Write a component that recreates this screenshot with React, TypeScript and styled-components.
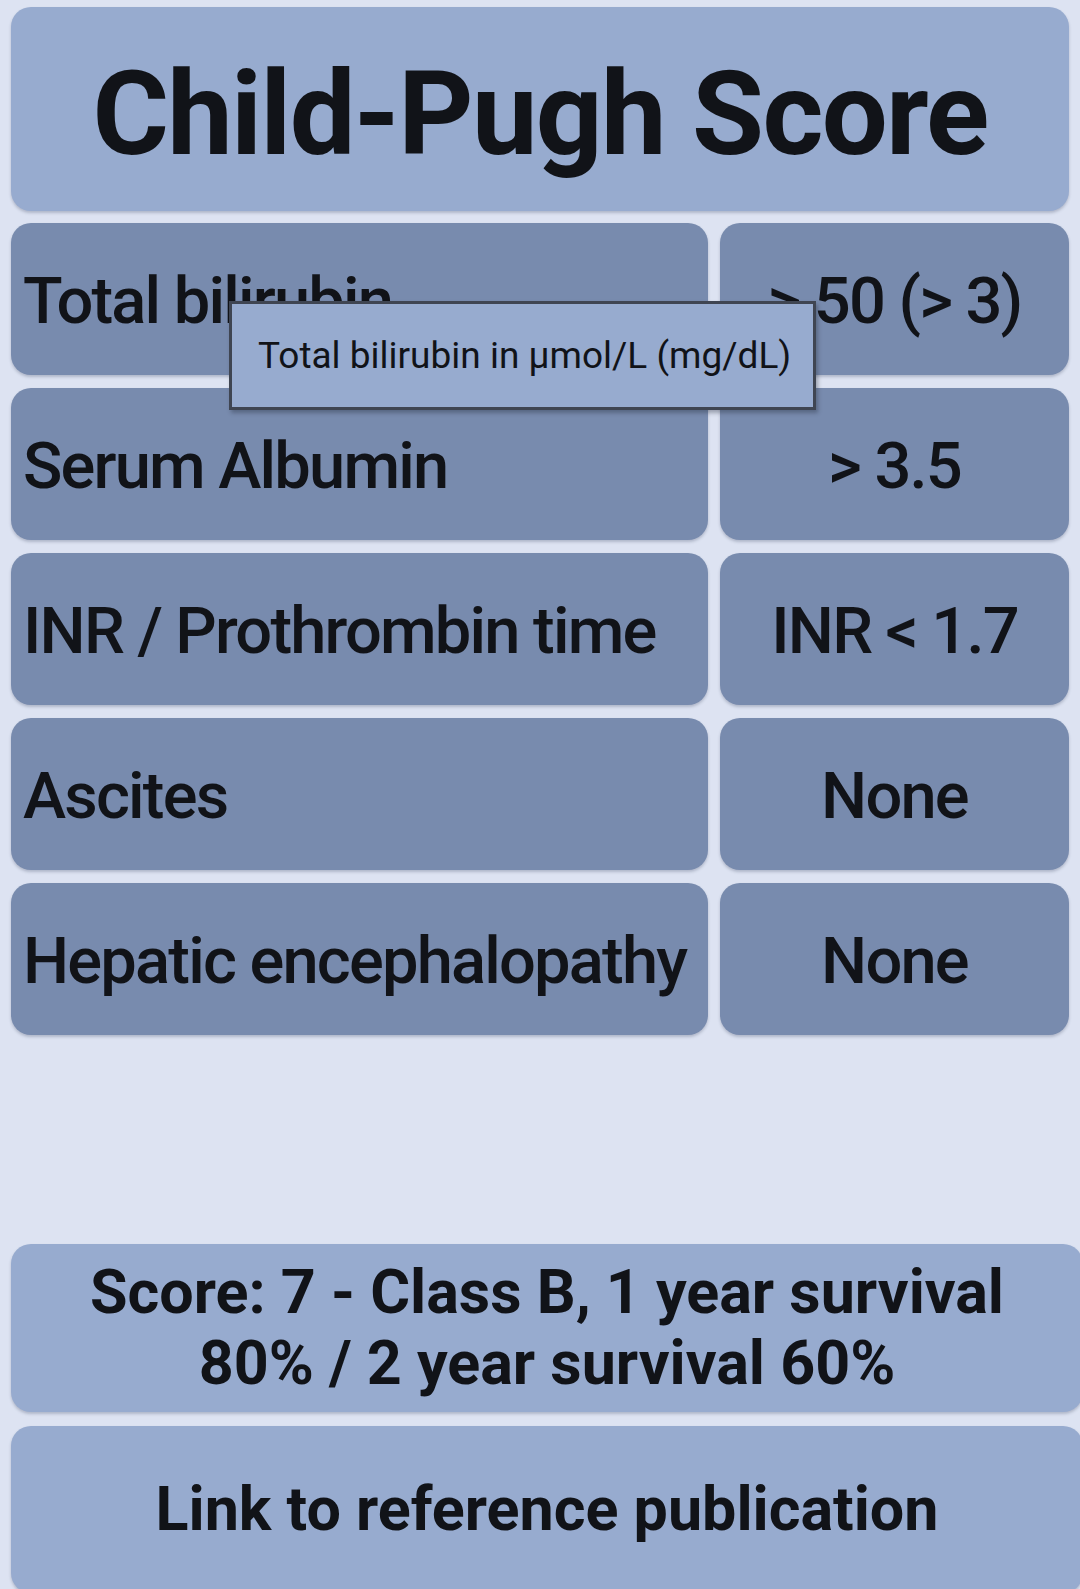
import * as React from 'react'
import styled, { createGlobalStyle } from 'styled-components'

const GlobalStyle = createGlobalStyle`
  html, body {
    margin: 0;
    padding: 0;
    background: #dde3f2;
  }

  body {
    font-family: Roboto, 'Noto Sans', sans-serif;
    color: #111318;
  }
`

const Page = styled.div`
  position: relative;
  height: 1589px;
  overflow: hidden;
  box-sizing: border-box;
  padding: 7px 11px 0 11px;
  display: flex;
  flex-direction: column;
  background: #dde3f2;
`

const TitleCard = styled.div`
  background: #97abcf;
  border-radius: 20px;
  padding: 39px 0 28px;
  text-align: center;
  box-shadow: 0 2px 3px rgba(40, 50, 80, 0.25);
`

const Title = styled.h1`
  margin: 0;
  font-size: 117px;
  font-weight: 700;
  line-height: 1.172;
  letter-spacing: -1.7px;
`

const Table = styled.div`
  margin-top: 12px;
  display: flex;
  flex-direction: column;
  gap: 13px;
`

const Row = styled.div`
  display: grid;
  grid-template-columns: 697px 1fr;
  gap: 12px;
`

const Cell = styled.div<{ $center?: boolean }>`
  background: #788bae;
  border-radius: 20px;
  height: 152px;
  box-sizing: border-box;
  display: flex;
  align-items: center;
  justify-content: ${(p) => (p.$center ? 'center' : 'flex-start')};
  padding: 4px 12px 0;
  font-size: 65px;
  font-weight: 500;
  line-height: 1.172;
  letter-spacing: -1.8px;
  white-space: nowrap;
  box-shadow: 0 2px 3px rgba(40, 50, 80, 0.25);
`

const Tooltip = styled.div`
  position: absolute;
  left: 229px;
  top: 301px;
  width: 587px;
  height: 109px;
  box-sizing: border-box;
  display: flex;
  align-items: center;
  padding-left: 26px;
  background: #97abcf;
  border: 3px solid #3f4552;
  box-shadow: 2px 3px 4px rgba(30, 35, 50, 0.35);
  font-size: 37px;
  font-weight: 400;
  white-space: nowrap;
`

const Results = styled.div`
  margin-top: auto;
  margin-right: -14px;
  display: flex;
  flex-direction: column;
  gap: 14px;
  margin-bottom: -4px;
`

const ResultCard = styled.div<{ $pad: number }>`
  background: #97abcf;
  border-radius: 20px;
  padding: ${(p) => p.$pad}px 10px;
  text-align: center;
  font-size: 61px;
  font-weight: 700;
  line-height: 1.165;
  box-shadow: 0 2px 3px rgba(40, 50, 80, 0.25);
`

const rows: [string, string][] = [
  ['Total bilirubin', '> 50 (> 3)'],
  ['Serum Albumin', '> 3.5'],
  ['INR / Prothrombin time', 'INR < 1.7'],
  ['Ascites', 'None'],
  ['Hepatic encephalopathy', 'None'],
]

const App = () => (
  <>
    <GlobalStyle />
    <Page>
      <TitleCard>
        <Title>Child-Pugh Score</Title>
      </TitleCard>
      <Table>
        {rows.map(([label, value]) => (
          <Row key={label}>
            <Cell>{label}</Cell>
            <Cell $center>{value}</Cell>
          </Row>
        ))}
      </Table>
      <Results>
        <ResultCard $pad={13}>
          Score: 7 - Class B, 1 year survival
          <br />
          80% / 2 year survival 60%
        </ResultCard>
        <ResultCard $pad={48}>Link to reference publication</ResultCard>
      </Results>
      <Tooltip>Total bilirubin in μmol/L (mg/dL)</Tooltip>
    </Page>
  </>
)

export default App
